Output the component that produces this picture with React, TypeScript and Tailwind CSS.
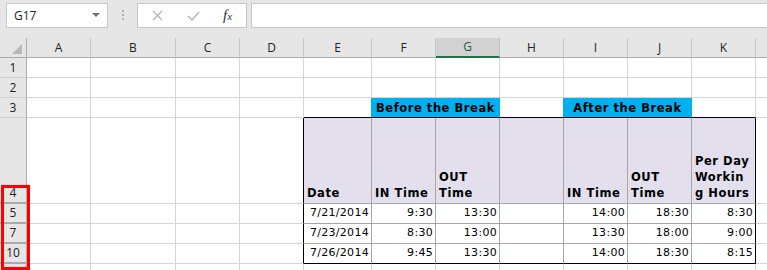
import React from "react";

const COLS = ["A", "B", "C", "D", "E", "F", "G", "H", "I", "J", "K"];
const TABLE_ROWS = [4, 5, 7, 10];

type CellProps = { r: number; c: number; children?: React.ReactNode; extra?: string };

function Cell({ r, c, children, extra = "" }: CellProps) {
  const inRow = TABLE_ROWS.includes(r);
  const inCol = c >= 4 && c <= 10;
  let rb = "border-r-[#d4d4d4]";
  if (inRow && (c === 3 || c === 10)) rb = "border-r-black";
  else if (inRow && c >= 4 && c <= 9) rb = "border-r-[#a6a6a6]";
  let bb = "border-b-[#d4d4d4]";
  if ((r === 3 || r === 10) && inCol) bb = "border-b-black";
  else if ((r === 4 || r === 5 || r === 7) && inCol) bb = "border-b-[#a6a6a6]";
  if (r === 11) bb = "border-b-transparent";
  const bg = r === 4 && inCol ? "bg-[#e4dfec]" : "bg-white";
  return <div className={`border-r border-b ${rb} ${bb} ${bg} ${extra}`}>{children}</div>;
}

function RowHead({ n, hidden }: { n: number; hidden?: boolean }) {
  return (
    <div
      className={
        hidden
          ? "flex items-end justify-center pb-[1px] leading-[17px] bg-[#e6e6e6] border-r border-r-[#ababab] border-b-2 border-b-[#a9a9a9] text-[12px] text-[#222] font-['Open_Sans',sans-serif]"
          : "flex items-end justify-center pb-[1px] leading-[17px] bg-[#e6e6e6] border-r border-r-[#ababab] border-b border-b-[#cfcfcf] text-[12px] text-[#222] font-['Open_Sans',sans-serif]"
      }
    >
      {n}
    </div>
  );
}

const data = [
  { r: 5, v: ["7/21/2014", "9:30", "13:30", "", "14:00", "18:30", "8:30"] },
  { r: 7, v: ["7/23/2014", "8:30", "13:00", "", "13:30", "18:00", "9:00"] },
  { r: 10, v: ["7/26/2014", "9:45", "13:30", "", "14:00", "18:30", "8:15"] },
];

const boldCls = "font-bold text-[11.5px] tracking-[0.55px] text-black leading-[16px]";

export default function App() {
  const headTexts: React.ReactNode[] = [
    "Date",
    "IN Time",
    <>OUT<br />Time</>,
    "",
    "IN Time",
    <>OUT<br />Time</>,
    <>Per Day<br />Workin<br />g Hours</>,
  ];

  return (
    <div className="relative w-[767px] h-[270px] overflow-hidden bg-white font-['DejaVu_Sans',sans-serif]">
      {/* Formula bar */}
      <div className="h-[38px] bg-[#e6e6e6] flex items-start pt-[3px] font-['Open_Sans',sans-serif]">
        <div className="ml-[6px] w-[102px] h-[25px] bg-white border border-[#c6c6c6] flex items-center justify-between pl-[7px] pr-[7px]">
          <span className="text-[12px] text-[#222]">G17</span>
          <svg width="8" height="5" viewBox="0 0 8 5">
            <path d="M0 0 H8 L4 4 Z" fill="#6e6e6e" />
          </svg>
        </div>
        <div className="ml-[14px] mt-[7px] flex flex-col gap-[2px]">
          <div className="w-[2px] h-[2px] bg-[#b0b0b0]" />
          <div className="w-[2px] h-[2px] bg-[#b0b0b0]" />
          <div className="w-[2px] h-[2px] bg-[#b0b0b0]" />
        </div>
        <div className="ml-[13px] w-[110px] h-[25px] bg-white border border-[#c6c6c6] flex items-center">
          <svg className="ml-[14px]" width="11" height="11" viewBox="0 0 11 11">
            <path d="M1 1 L10 10 M10 1 L1 10" stroke="#b3b3b3" strokeWidth="1.3" />
          </svg>
          <svg className="ml-[24px]" width="13" height="10" viewBox="0 0 13 10">
            <path d="M1 5 L5 9 L12 1" stroke="#b3b3b3" strokeWidth="1.4" fill="none" />
          </svg>
          <span className="ml-[23px] text-[15px] italic text-[#333] font-['Liberation_Serif',serif] leading-none">
            f<span className="text-[11px]">x</span>
          </span>
        </div>
        <div className="ml-[4px] flex-1 h-[25px] bg-white border border-[#c6c6c6] border-r-0" />
      </div>

      {/* Sheet grid */}
      <div className="grid grid-cols-[27px_64px_85px_64px_64px_68px_64px_64px_64px_64px_64px_64px_11px] grid-rows-[20px_20px_20px_20px_86px_20px_20px_20px_20px] text-[11px] text-black">
        {/* header row */}
        <div className="relative bg-[#e6e6e6] border-r border-b border-r-[#ababab] border-b-[#ababab]">
          <svg className="absolute right-[4px] bottom-[3px]" width="10" height="10" viewBox="0 0 10 10">
            <path d="M10 0 V10 H0 Z" fill="#b7b7b7" />
          </svg>
        </div>
        {COLS.map((l) =>
          l === "G" ? (
            <div
              key={l}
              className="flex items-center justify-center bg-[#d2d2d2] border-r border-r-[#c0c0c0] border-b-2 border-b-[#217346] text-[12px] text-[#1f5e3b] font-['Open_Sans',sans-serif]"
            >
              {l}
            </div>
          ) : (
            <div
              key={l}
              className="flex items-center justify-center bg-[#e6e6e6] border-r border-r-[#c6c6c6] border-b border-b-[#ababab] text-[12px] text-[#222] font-['Open_Sans',sans-serif]"
            >
              {l}
            </div>
          )
        )}
        <div className="bg-[#e6e6e6] border-b border-b-[#ababab]" />

        {/* rows 1, 2 */}
        {[1, 2].map((r) => (
          <React.Fragment key={r}>
            <RowHead n={r} />
            {COLS.map((_, c) => (
              <Cell key={c} r={r} c={c} />
            ))}
            <div className="bg-white border-b border-b-[#d4d4d4]" />
          </React.Fragment>
        ))}

        {/* row 3 */}
        <RowHead n={3} />
        <Cell r={3} c={0} />
        <Cell r={3} c={1} />
        <Cell r={3} c={2} />
        <Cell r={3} c={3} />
        <div className="border-r border-b border-r-[#00b0f0] border-b-black bg-white" />
        <div className={`col-span-2 flex items-center justify-center bg-[#00b0f0] border-r border-b border-r-[#00b0f0] border-b-black ${boldCls}`}>
          Before the Break
        </div>
        <div className="border-r border-b border-r-[#00b0f0] border-b-black bg-white" />
        <div className={`col-span-2 flex items-center justify-center bg-[#00b0f0] border-r border-b border-r-[#00b0f0] border-b-black ${boldCls}`}>
          After the Break
        </div>
        <div className="border-r border-b border-r-[#d4d4d4] border-b-black bg-white" />
        <div className="bg-white border-b border-b-[#d4d4d4]" />

        {/* row 4 */}
        <RowHead n={4} hidden />
        {COLS.map((_, c) => (
          <Cell key={c} r={4} c={c} extra="flex items-end">
            {c >= 4 ? (
              <div className={`pl-[3px] pb-[2px] whitespace-nowrap ${boldCls}`}>{headTexts[c - 4]}</div>
            ) : null}
          </Cell>
        ))}
        <div className="bg-white border-b border-b-[#d4d4d4]" />

        {/* data rows */}
        {data.map((row) => (
          <React.Fragment key={row.r}>
            <RowHead n={row.r} hidden />
            {COLS.map((_, c) => (
              <Cell key={c} r={row.r} c={c} extra="flex items-center justify-end pr-[2px] whitespace-nowrap text-[11px] tracking-[0.3px]">
                {c >= 4 ? row.v[c - 4] : null}
              </Cell>
            ))}
            <div className="bg-white border-b border-b-[#d4d4d4]" />
          </React.Fragment>
        ))}

        {/* row 11 (partial) */}
        <div className="bg-[#e6e6e6] border-r border-r-[#ababab]" />
        {COLS.map((_, c) => (
          <Cell key={c} r={11} c={c} />
        ))}
        <div className="bg-white" />
      </div>

      {/* red highlight box */}
      <div className="absolute left-[1px] top-[185px] w-[29px] h-[85px] border-[3px] border-[#ff0000]" />
    </div>
  );
}
